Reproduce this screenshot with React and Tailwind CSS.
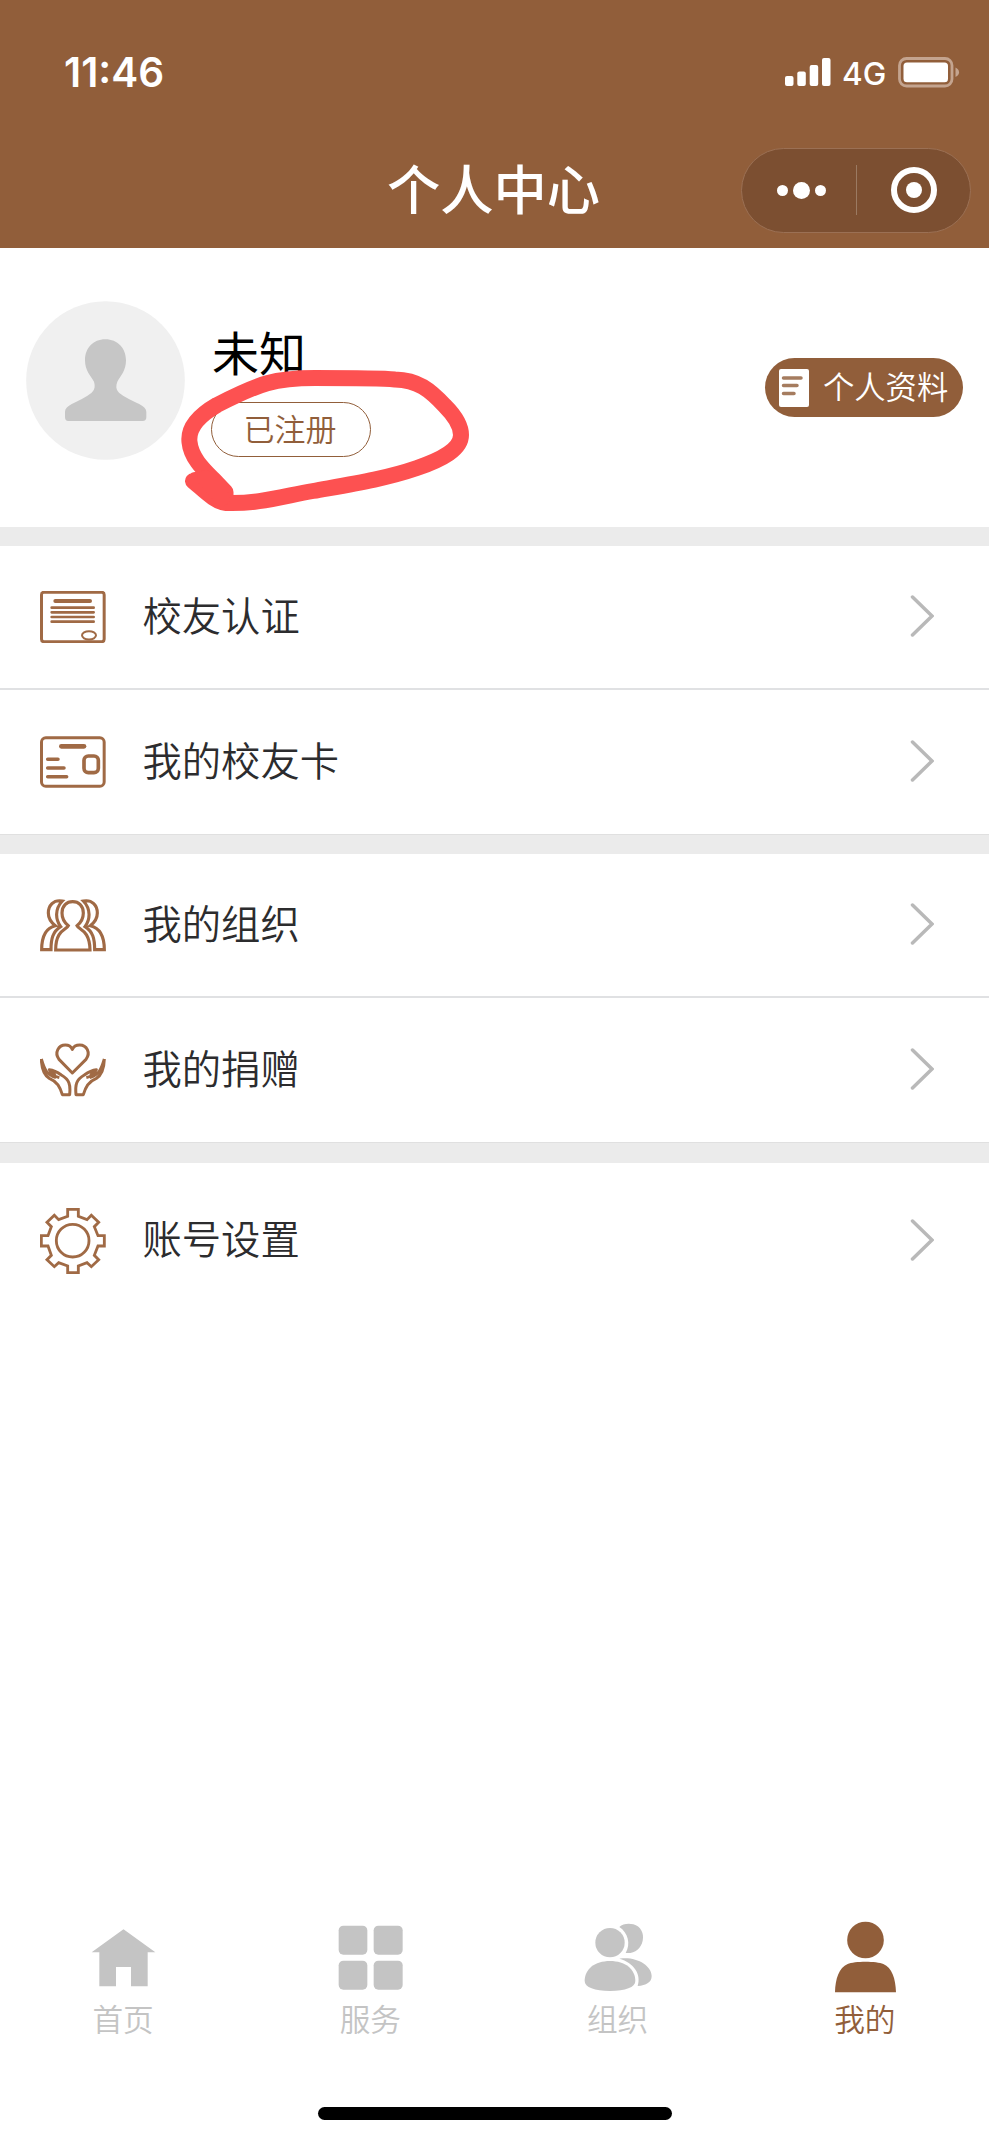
import React from 'react';

const CertificateIcon = () => (
  <svg className="w-[66px] h-[52px]" viewBox="0 0 198 156" fill="none" stroke="#a06a45" strokeLinecap="round">
    <rect x="4.500" y="4" width="188" height="148" rx="7" strokeWidth="9" />
    <path d="M46 30H150" strokeWidth="12" />
    <path d="M35 50H161M35 64H161M35 78H161M35 92H161" strokeWidth="8" />
    <ellipse cx="147" cy="133" rx="21" ry="12.5" strokeWidth="6" />
  </svg>
);

const CardIcon = () => (
  <svg className="w-[66px] h-[52px]" viewBox="0 0 198 156" fill="none" stroke="#a06a45" strokeLinecap="round">
    <rect x="4.500" y="5" width="188" height="146" rx="13" strokeWidth="9" />
    <path d="M64 31H132" strokeWidth="14" />
    <path d="M23 70H54M23 96H72M23 122H80" strokeWidth="10.5" />
    <rect x="132" y="60" width="43" height="50" rx="13" strokeWidth="11" />
  </svg>
);

const GroupIcon = () => (
  <svg className="w-[66px] h-[53px]" viewBox="0 0 198 159" fill="none" stroke="#a06a45" strokeWidth="9.500">
    <path d="M85 80C72 70 66 58 66 42C66 20 80 8 98 8C116 8 130 20 130 42C130 58 124 70 111 80C116 93 149 92 150 153H47C47 92 80 93 85 80Z" />
    <path d="M67 6C40 1 25 20 25 42C25 60 33 70 46 80C12 88 5 120 5 152H33C33 120 38 98 62 83C46 62 44 30 67 6Z" />
    <path d="M130 6C157 1 172 20 172 42C172 60 164 70 151 80C185 88 193 120 193 152H164C164 120 159 98 135 83C151 62 153 30 130 6Z" />
  </svg>
);

const DonateIcon = () => (
  <svg className="w-[66px] h-[54px]" viewBox="0 0 198 162" fill="none" stroke="#a06a45" strokeWidth="9" strokeLinejoin="round">
    <path d="M97 90L57 49C42 29 56 6 76 6C87 6 94 12 97 19C100 12 108 6 119 6C140 6 153 29 138 49Z" />
    <path d="M4 48C5 80 14 98 28 106C52 116 60 132 67 155H89C92 124 88 110 64 96C52 87 40 81 28 80L46 97M4 48C14 82 20 94 48 104M28 80C36 96 42 100 58 104" />
    <path d="M193 48C192 80 183 98 169 106C145 116 137 132 130 155H108C105 124 109 110 133 96C145 87 157 81 169 80L151 97M193 48C183 82 177 94 149 104M169 80C161 96 155 100 139 104" />
  </svg>
);

const GearIcon = () => (
  <svg className="w-[66px] h-[66px]" viewBox="0 0 198 198" fill="none" stroke="#a06a45" strokeWidth="8.500">
    <path d="M83 4H115V25L141 35L154 22L176 43L163 56L174 83H193V114H174L163 142L176 155L154 176L141 164L115 174V194H83V174L56 164L43 176L21 155L34 142L24 114H4V83H24L34 56L21 43L43 22L56 35L83 25Z" />
    <circle cx="98" cy="98" r="49" />
  </svg>
);

const HomeIcon = () => (
  <svg className="w-[81px] h-[81px]" viewBox="0 0 243 243" fill="currentColor">
    <path d="M121.5 40L217 109H194V211H144V153H99V211H49V109H26Z" />
  </svg>
);

const ServiceIcon = () => (
  <svg className="w-[81px] h-[81px]" viewBox="0 0 243 243" fill="currentColor">
    <rect x="26" y="29" width="86" height="87" rx="14" />
    <rect x="131" y="29" width="87" height="87" rx="14" />
    <rect x="26" y="134" width="86" height="87" rx="14" />
    <rect x="131" y="134" width="87" height="87" rx="14" />
  </svg>
);

const OrgIcon = () => (
  <svg className="w-[81px] h-[81px]" viewBox="0 0 243 243" fill="currentColor">
    <circle cx="96" cy="80" r="44" />
    <path d="M124 33C134 24 150 21 166 25C188 31 199 52 194 74C189 98 169 114 143 111C159 84 150 50 124 33Z" />
    <path d="M20 195C20 160 50 135 96 135C142 135 172 160 172 195C172 214 142 225 96 225C50 225 20 214 20 195Z" />
    <path d="M124 128C172 120 221 147 221 180C221 199 205 208 179 210C191 174 167 140 124 128Z" />
  </svg>
);

const MineIcon = () => (
  <svg className="w-[81px] h-[81px]" viewBox="0 0 243 243" fill="currentColor">
    <circle cx="121.500" cy="72" r="55" />
    <path d="M30 229C31 188 42 155 68 144C88 135 155 135 175 144C201 155 212 188 213 229Z" />
  </svg>
);

const menuGroups = [
  [
    { label: '校友认证', icon: CertificateIcon },
    { label: '我的校友卡', icon: CardIcon },
  ],
  [
    { label: '我的组织', icon: GroupIcon },
    { label: '我的捐赠', icon: DonateIcon },
  ],
];

const tabs = [
  { label: '首页', icon: HomeIcon },
  { label: '服务', icon: ServiceIcon },
  { label: '组织', icon: OrgIcon },
  { label: '我的', icon: MineIcon, active: true },
];

function MenuRow({ label, icon: Icon, className }) {
  return (
    <div className={`flex items-center pl-[39.5px] pr-[55px] ${className}`}>
      <Icon />
      <span className="ml-[37px] pb-[7px] text-[39.3px] leading-[56px] font-[350] text-[#2c2c2e]">{label}</span>
      <svg className="ml-auto mb-0.5 w-6 h-[42px]" viewBox="0 0 24 42" fill="none" stroke="#b9b9b9" strokeWidth="3.5" strokeLinecap="round">
        <path d="M2.500 2L22 21L2.500 40" />
      </svg>
    </div>
  );
}

function Header() {
  return (
    <header className="h-[248px] bg-[#915e3a] text-white">
      {/* Status bar */}
      <div className="h-[147px] flex items-start justify-between pl-16 pr-[29px] font-['Inter']">
        <span className="mt-[49px] text-[40.5px] leading-[48px] font-semibold">11:46</span>
        <div className="mt-[57px] h-8 flex items-center">
          <svg className="w-[46px] h-[30px]" viewBox="0 0 46 30" fill="currentColor">
            <rect x="0" y="18" width="8.500" height="10" rx="2" />
            <rect x="12.300" y="13.500" width="8.500" height="14.500" rx="2" />
            <rect x="24.700" y="7" width="8.500" height="21" rx="2" />
            <rect x="37" y="0" width="8.500" height="28" rx="2" />
          </svg>
          <span className="ml-[11px] w-[46px] pt-px text-[31.5px] leading-8 font-medium">4G</span>
          <svg className="ml-[10px] w-[62px] h-8" viewBox="0 0 62 32" fill="none">
            <rect x="1.500" y="1.500" width="52.500" height="27.500" rx="7" stroke="#c4a48f" strokeWidth="2.800" />
            <rect x="5.500" y="5.500" width="44.500" height="19.700" rx="3.500" fill="#fff" />
            <path d="M57.500 10.500C62.200 12.500 62.200 18 57.500 20Z" fill="#c4a48f" />
          </svg>
        </div>
      </div>

      {/* Title and mini program capsule */}
      <div className="h-[86px] grid grid-cols-[1fr_auto_1fr] items-center pr-[18px] pl-4">
        <span />
        <h1 className="pb-[7px] text-[53.3px] leading-[78px] font-medium">个人中心</h1>
        <div className="justify-self-end w-[230px] h-[85px] rounded-full border border-[#9b7054] bg-[#7c4f31] flex items-center">
          <div className="w-[115px] h-[50px] border-r border-[#9b7a62] flex items-center justify-center gap-[5px] pl-[5px]">
            <i className="size-[11px] rounded-full bg-white" />
            <i className="size-[17px] rounded-full bg-white" />
            <i className="size-[11px] rounded-full bg-white" />
          </div>
          <div className="ml-[34px] size-[46px] rounded-full border-[6px] border-white flex items-center justify-center">
            <i className="size-4 rounded-full bg-white" />
          </div>
        </div>
      </div>
    </header>
  );
}

function Profile() {
  return (
    <section className="relative h-[279px] flex pl-[26px] pr-[26px]">
      <svg className="mt-[52.5px] size-[159px]" viewBox="0 0 477 477">
        <circle cx="238.500" cy="238.500" r="238" fill="#f0f0f0" />
        <path d="M238 115C275 115 300 142 300 178C300 208 285 224 274 242C264 268 280 277 298 288C325 304 361 314 361 332V349Q361 360 350 360H127Q117 360 117 349V332C117 314 151 304 178 288C196 277 212 268 204 242C193 224 177 208 177 178C177 142 201 115 238 115Z" fill="#c6c6c6" />
      </svg>
      <div className="ml-[26px] mt-[68px]">
        <div className="pl-px text-[47px] leading-[70px] text-black">未知</div>
        <div className="mt-4 w-[160px] h-[55px] rounded-full border border-[#915e3a] flex items-center justify-center pr-[2px] pb-[4px] text-[31px] leading-none font-[350] text-[#915e3a]">
          已注册
        </div>
      </div>
      <button className="ml-auto mt-[110px] w-[198px] h-[59px] rounded-full bg-[#915e3a] flex items-center pl-[14px] text-white">
        <svg className="w-[30px] h-[38px]" viewBox="0 0 30 38">
          <rect width="30" height="38" rx="2" fill="#fff" />
          <path d="M4.500 9H22M4.500 16.500H18M4.500 24.500H15" stroke="#a57c5f" strokeWidth="3.5" strokeLinecap="round" />
        </svg>
        <span className="ml-[14px] pb-[4px] text-[31.300px] leading-[46px] font-[350]">个人资料</span>
      </button>

      {/* Marker stroke around the status badge */}
      <svg className="absolute left-[170px] top-[112px] w-[310px] h-[160px]" viewBox="170 360 310 160" fill="none" stroke="#fd5151" strokeWidth="16" strokeLinecap="round" strokeLinejoin="round">
        <path d="M193 481C204 490 215 502 226 503C258 504 280 497 313 491C352 484 385 479 417 468C443 459 461 449 461 435C461 424 453 414 445 406C430 390 418 380 395 379.500C380 378 345 378 315 378C275 378 260 383 217 405C198 416 188 429 189.500 442C191 458 204 470 214 480L225.500 492V499L208 485L195 480" />
        <path d="M205 478L222 498" />
      </svg>
    </section>
  );
}

export default function App() {
  return (
    <div className="w-[989px] h-[2141px] flex flex-col bg-white overflow-hidden font-['Noto_Sans_CJK_SC',sans-serif]">
      <Header />
      <Profile />

      <div className="h-[19px] bg-[#ebebeb]" />
      {menuGroups.map(([first, second]) => (
        <React.Fragment key={first.label}>
          <MenuRow {...first} className="h-[144px] border-b-2 border-[#e0e1e3]" />
          <MenuRow {...second} className="h-[144px]" />
          <div className="h-[20.4px] bg-[#ebebeb] border-t border-[#e0e0e0]" />
        </React.Fragment>
      ))}
      <MenuRow label="账号设置" icon={GearIcon} className="h-[156px]" />

      {/* Bottom tab bar */}
      <nav className="mt-auto h-[225px] flex flex-col items-center">
        <div className="w-full grid grid-cols-4">
          {tabs.map(({ label, icon: Icon, active }) => (
            <div key={label} className={`flex flex-col items-center ${active ? 'text-[#915e3a]' : 'text-[#c4c4c4]'}`}>
              <Icon />
              <span className="pr-px text-[30.7px] leading-[42px] font-[350]">{label}</span>
            </div>
          ))}
        </div>
        <div className="mt-auto mb-[21px] w-[354px] h-[13px] rounded-full bg-black" />
      </nav>
    </div>
  );
}
